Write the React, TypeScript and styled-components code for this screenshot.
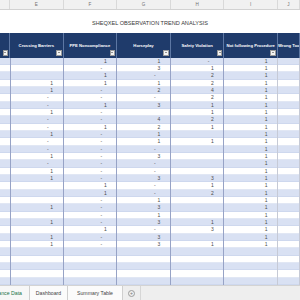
import React from "react";
import styled, { createGlobalStyle } from "styled-components";

const COLS = "10px repeat(5, 53.6px) 1fr";

const GlobalStyle = createGlobalStyle`
  html, body { margin: 0; padding: 0; background: #ffffff; }
  body {
    width: 300px;
    height: 300px;
    overflow: hidden;
    font-family: "Liberation Sans", Arial, sans-serif;
  }
`;

const Page = styled.div`
  width: 300px;
  height: 300px;
  display: flex;
  flex-direction: column;
  overflow: hidden;
  background: #ffffff;
`;

const LetterBar = styled.div`
  flex: none;
  height: 10px;
  box-sizing: border-box;
  display: grid;
  grid-template-columns: ${COLS};
  background: #f1f1f1;
  border-bottom: 1px solid #d2d2d2;
`;

const Letter = styled.div`
  display: flex;
  align-items: center;
  justify-content: center;
  border-right: 1px solid #d9d9d9;
  font-size: 4.6px;
  color: #727272;
`;

const TitleArea = styled.div`
  flex: none;
  height: 23px;
  display: flex;
  align-items: center;
  justify-content: center;
  padding-top: 3px;
  box-sizing: border-box;
`;

const Title = styled.h1`
  margin: 0;
  font-size: 5.6px;
  font-weight: 400;
  color: #383838;
  white-space: nowrap;
`;

const HeaderRow = styled.div`
  flex: none;
  height: 24.5px;
  display: grid;
  grid-template-columns: ${COLS};
  background: #1f3b6b;
`;

const HeaderCell = styled.div`
  display: grid;
  border-right: 1px solid #5d77a3;
  overflow: hidden;
`;

const HeaderLabel = styled.span`
  grid-area: 1 / 1;
  align-self: center;
  justify-self: center;
  color: #ffffff;
  font-size: 4.2px;
  font-weight: 700;
  white-space: nowrap;
  padding-top: 0.5px;
`;

const FilterButton = styled.span`
  grid-area: 1 / 1;
  align-self: end;
  justify-self: end;
  width: 5.5px;
  height: 5.5px;
  margin: 0 1px 2px 0;
  box-sizing: border-box;
  background: #f4f4f4;
  border: 0.5px solid #9a9a9a;
  display: flex;
  align-items: center;
  justify-content: center;
`;

const Arrow = styled.span`
  width: 0;
  height: 0;
  border-left: 1.4px solid transparent;
  border-right: 1.4px solid transparent;
  border-top: 1.6px solid #303030;
`;

const Body = styled.div`
  flex: none;
  display: flex;
  flex-direction: column;
`;

const Row = styled.div<{ $band: boolean }>`
  height: 7.35px;
  display: grid;
  grid-template-columns: ${COLS};
  background: ${(p) => (p.$band ? "#d9e1f3" : "#ffffff")};
  box-shadow: inset 0 -0.5px 0 #c3cfea;
`;

const Cell = styled.div<{ $dash?: boolean; $light?: boolean }>`
  border-right: 1px solid ${(p) => (p.$light ? "#c6cad6" : "#97a3c6")};
  font-size: 5px;
  line-height: 7.35px;
  color: #4a4a4a;
  text-align: right;
  padding-right: ${(p) => (p.$dash ? "14px" : "9.5px")};
  white-space: nowrap;
  overflow: hidden;
`;

const TabBar = styled.div`
  flex: 1;
  display: flex;
  align-items: stretch;
  background: #eeeeee;
  border-top: 1px solid #d3d3d3;
`;

const Tab = styled.div<{ $active?: boolean; $width: number }>`
  flex: none;
  width: ${(p) => p.$width}px;
  display: flex;
  align-items: center;
  justify-content: ${(p) => (p.$active ? "flex-end" : "center")};
  padding-right: ${(p) => (p.$active ? "7px" : "0")};
  box-sizing: border-box;
  overflow: hidden;
  white-space: nowrap;
  font-size: 5.2px;
  color: ${(p) => (p.$active ? "#217346" : "#444444")};
  background: ${(p) => (p.$active ? "#f7f7f7" : "#fbfbfb")};
  border-right: 1px solid #cfcfcf;
`;

const AddTab = styled.div`
  flex: none;
  width: 17px;
  display: flex;
  align-items: center;
  justify-content: center;
  border-right: 1px solid #d6d6d6;
`;

const AddCircle = styled.span`
  width: 5px;
  height: 5px;
  border-radius: 50%;
  border: 0.5px solid #9c9c9c;
  display: flex;
  align-items: center;
  justify-content: center;
  font-size: 5px;
  line-height: 5px;
  color: #777777;
`;

const letters = ["", "E", "F", "G", "H", "I", "J"];

const headers = [
  "",
  "Crossing Barriers",
  "PPE Noncompliance",
  "Horseplay",
  "Safety Violation",
  "Not following Procedure",
  "Wrong Tool Usage",
];

const data: string[][] = [
  ["", "1", "1", "-", "1"],
  ["", "-", "3", "1", "1"],
  ["", "1", "-", "2", "1"],
  ["1", "1", "1", "2", "1"],
  ["1", "-", "2", "4", "1"],
  ["-", "-", "-", "2", "1"],
  ["-", "1", "3", "1", "1"],
  ["1", "-", "", "1", "1"],
  ["-", "-", "4", "2", "1"],
  ["-", "1", "2", "1", "1"],
  ["1", "-", "1", "", "1"],
  ["-", "-", "1", "1", "1"],
  ["-", "-", "-", "", "1"],
  ["1", "-", "3", "", "1"],
  ["-", "-", "-", "", "1"],
  ["1", "-", "-", "", "1"],
  ["1", "-", "3", "3", "1"],
  ["", "1", "-", "1", "1"],
  ["", "1", "-", "2", "1"],
  ["", "-", "1", "", "1"],
  ["1", "-", "3", "", "1"],
  ["", "-", "1", "", "1"],
  ["1", "-", "3", "1", "1"],
  ["", "1", "-", "3", "1"],
  ["1", "-", "3", "", "1"],
  ["1", "-", "3", "1", "1"],
];

const TOTAL_ROWS = 31;
const rows: string[][] = Array.from({ length: TOTAL_ROWS }, (_, i) => data[i] ?? ["", "", "", "", ""]);

export default function App() {
  return (
    <>
      <GlobalStyle />
      <Page>
        <LetterBar>
          {letters.map((l, i) => (
            <Letter key={i}>{l}</Letter>
          ))}
        </LetterBar>
        <TitleArea>
          <Title>SHEQXEL OBSERVATION TREND ANALYSIS</Title>
        </TitleArea>
        <HeaderRow>
          {headers.map((h, i) => (
            <HeaderCell key={i}>
              {h && <HeaderLabel>{h}</HeaderLabel>}
              {i < 6 && (
                <FilterButton>
                  <Arrow />
                </FilterButton>
              )}
            </HeaderCell>
          ))}
        </HeaderRow>
        <Body>
          {rows.map((r, ri) => (
            <Row key={ri} $band={ri % 2 === 0}>
              <Cell />
              {r.map((v, ci) => (
                <Cell key={ci} $dash={v === "-"} $light={ci === 4}>
                  {v}
                </Cell>
              ))}
              <Cell $light />
            </Row>
          ))}
        </Body>
        <TabBar>
          <Tab $active $width={30}>Performance Data</Tab>
          <Tab $width={38}>Dashboard</Tab>
          <Tab $width={55}>Summary Table</Tab>
          <AddTab>
            <AddCircle>+</AddCircle>
          </AddTab>
        </TabBar>
      </Page>
    </>
  );
}
